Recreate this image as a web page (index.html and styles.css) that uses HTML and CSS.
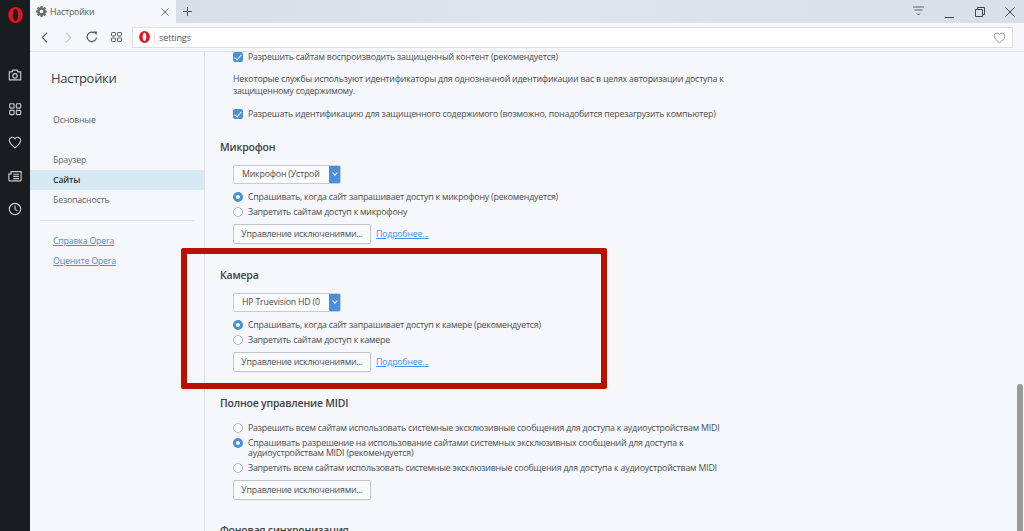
FILE: index.html
```html
<!DOCTYPE html>
<html lang="ru">
<head>
  <meta charset="UTF-8">
  <title>Настройки</title>
  <link rel="stylesheet" href="styles.css">
</head>
<body>
  <div class="window">
    <aside class="rail">
      <svg class="rail-logo" width="15" height="16" viewBox="0 0 18 20"><path fill="#e8111f" fill-rule="evenodd" d="M9 0a9 10 0 1 0 0 20A9 10 0 1 0 9 0zm0 2.600c2 0 3.300 3.300 3.300 7.400S11 17.400 9 17.400 5.700 14.100 5.700 10 7 2.600 9 2.600z"/></svg>
      <svg class="rail-icon" width="14" height="14" viewBox="0 0 16 16" fill="none" stroke="#c9cbcc" stroke-width="1.300"><path d="M1.500 4.500h3l1-2h5l1 2h3v9h-13z"/><circle cx="8" cy="9" r="2.500"/></svg>
      <svg class="rail-icon" width="14" height="14" viewBox="0 0 16 16" fill="none" stroke="#c9cbcc" stroke-width="1.300"><rect x="2" y="2" width="5" height="5" rx="1"/><rect x="9.500" y="2" width="5" height="5" rx="1"/><rect x="2" y="9.500" width="5" height="5" rx="1"/><rect x="9.500" y="9.500" width="5" height="5" rx="1"/></svg>
      <svg class="rail-icon" width="14" height="14" viewBox="0 0 16 16" fill="none" stroke="#c9cbcc" stroke-width="1.300"><path d="M8 14.500C3 10.800 1.500 8.500 1.500 6A3.500 3.500 0 0 1 8 4.300 3.500 3.500 0 0 1 14.500 6c0 2.500-1.500 4.800-6.500 8.500z"/></svg>
      <svg class="rail-icon" width="14" height="14" viewBox="0 0 16 16" fill="none" stroke="#c9cbcc" stroke-width="1.300"><path d="M3.500 3h11.500v9.500a1 1 0 0 1-1 1H2a1 1 0 0 1-1-1V5.500h2.500zM6 6h6.500M6 8.500h6.500M6 11h6.500"/></svg>
      <svg class="rail-icon" width="14" height="14" viewBox="0 0 16 16" fill="none" stroke="#c9cbcc" stroke-width="1.300"><circle cx="8" cy="8" r="6.500"/><path d="M8 4v4.300l2.600 1.700"/></svg>
    </aside>

    <div class="browser">
      <header class="tabstrip">
        <div class="tab">
          <svg width="11" height="11" viewBox="0 0 14 14"><path fill="#6b6e70" fill-rule="evenodd" d="M5.800 0h2.400l.3 1.800 1.100.5 1.500-1 1.700 1.700-1 1.500.5 1.100 1.700.3v2.400l-1.700.3-.5 1.100 1 1.500-1.700 1.700-1.500-1-1.100.5-.3 1.600H5.800l-.3-1.600-1.100-.5-1.500 1-1.700-1.700 1-1.500-.5-1.100L0 8.200V5.800l1.700-.3.5-1.100-1-1.500 1.700-1.700 1.500 1 1.100-.5zM7 4.700a2.300 2.300 0 1 0 0 4.600 2.300 2.300 0 0 0 0-4.600z"/></svg>
          <span class="tab-title">Настройки</span>
          <svg class="tab-close" width="8" height="8" viewBox="0 0 9 9" stroke="#55585a" stroke-width="1"><path d="M.5.500l8 8M8.500.500l-8 8"/></svg>
        </div>
        <svg class="tab-add" width="9" height="9" viewBox="0 0 10 10" stroke="#55585a" stroke-width="1.100"><path d="M5 0v10M0 5h10"/></svg>
        <div class="win-controls">
          <svg width="12" height="12" viewBox="0 0 12 12" fill="none" stroke="#5f6265"><path d="M0 1h11M1.500 4h8M4 7.500l1.500 1.500L7 7.500" stroke-width="1"/></svg>
          <svg width="10" height="12" viewBox="0 0 10 12" stroke="#44474a"><path d="M0 11.500h9" stroke-width="1"/></svg>
          <svg width="10" height="10" viewBox="0 0 10 10" fill="none" stroke="#44474a"><path d="M.5 2.500h7v7h-7zM2.500 2.500v-2h7v7h-2"/></svg>
          <svg width="10" height="10" viewBox="0 0 10 10" stroke="#44474a"><path d="M.5.500l9 9M9.500.500l-9 9"/></svg>
        </div>
      </header>

      <nav class="toolbar">
        <svg class="tool back" width="7" height="11" viewBox="0 0 8 12" fill="none" stroke="#55585a" stroke-width="1.300"><path d="M7 .5L1.500 6 7 11.500"/></svg>
        <svg class="tool forward" width="7" height="11" viewBox="0 0 8 12" fill="none" stroke="#c5c7c9" stroke-width="1.300"><path d="M1 .5L6.500 6 1 11.500"/></svg>
        <svg class="tool reload" width="12" height="12" viewBox="0 0 12 12" fill="none" stroke="#55585a" stroke-width="1.200"><path d="M10.500 6.500A4.700 4.700 0 1 1 8.500 2"/><path d="M7.300 .3l3.700 .4-.6 3.500z" fill="#55585a" stroke="none"/></svg>
        <svg class="tool speed" width="11" height="10" viewBox="0 0 11 10" fill="none" stroke="#55585a"><rect x=".5" y=".5" width="4" height="3.500" rx=".8"/><rect x="6.500" y=".5" width="4" height="3.500" rx=".8"/><rect x=".5" y="6" width="4" height="3.500" rx=".8"/><rect x="6.500" y="6" width="4" height="3.500" rx=".8"/></svg>
        <div class="address">
          <svg width="11" height="12" viewBox="0 0 18 20"><path fill="#e8111f" fill-rule="evenodd" d="M9 0a9 10 0 1 0 0 20A9 10 0 1 0 9 0zm0 3c2 0 3 3.200 3 7s-1 7-3 7-3-3.200-3-7 1-7 3-7z"/></svg>
          <span class="address-text">settings</span>
          <svg class="address-heart" width="13" height="13" viewBox="0 0 16 16" fill="none" stroke="#8d9093" stroke-width="1.200"><path d="M8 14.500C3 10.800 1.500 8.500 1.500 6A3.500 3.500 0 0 1 8 4.300 3.500 3.500 0 0 1 14.500 6c0 2.500-1.500 4.800-6.500 8.500z"/></svg>
        </div>
      </nav>

      <div class="page">
        <aside class="sidebar">
          <h1>Настройки</h1>
          <a class="side-item">Основные</a>
          <a class="side-item browser-item">Браузер</a>
          <a class="side-item active">Сайты</a>
          <a class="side-item">Безопасность</a>
          <hr class="side-rule">
          <a class="side-link">Справка Opera</a>
          <a class="side-link">Оцените Opera</a>
        </aside>

        <main class="content">
          <label class="option"><span class="check"></span>Разрешить сайтам воспроизводить защищенный контент (рекомендуется)</label>
          <p class="note">Некоторые службы используют идентификаторы для однозначной идентификации вас в целях авторизации доступа к защищенному содержимому.</p>
          <label class="option"><span class="check"></span>Разрешать идентификацию для защищенного содержимого (возможно, понадобится перезагрузить компьютер)</label>

          <section class="group mic">
            <h2>Микрофон</h2>
            <div class="select"><span class="select-value">Микрофон (Устрой</span><span class="select-arrow"></span></div>
            <label class="option radio-row"><span class="radio on"></span>Спрашивать, когда сайт запрашивает доступ к микрофону (рекомендуется)</label>
            <label class="option radio-row"><span class="radio"></span>Запретить сайтам доступ к микрофону</label>
            <div class="actions"><button class="btn">Управление исключениями...</button><a class="more">Подробнее...</a></div>
          </section>

          <section class="group camera">
            <h2>Камера</h2>
            <div class="select"><span class="select-value">HP Truevision HD (0</span><span class="select-arrow"></span></div>
            <label class="option radio-row"><span class="radio on"></span>Спрашивать, когда сайт запрашивает доступ к камере (рекомендуется)</label>
            <label class="option radio-row"><span class="radio"></span>Запретить сайтам доступ к камере</label>
            <div class="actions"><button class="btn">Управление исключениями...</button><a class="more">Подробнее...</a></div>
          </section>

          <section class="group midi">
            <h2>Полное управление MIDI</h2>
            <label class="option radio-row"><span class="radio"></span>Разрешить всем сайтам использовать системные эксклюзивные сообщения для доступа к аудиоустройствам MIDI</label>
            <label class="option radio-row"><span class="radio on"></span><span class="wrap-text">Спрашивать разрешение на использование сайтами системных эксклюзивных сообщений для доступа к аудиоустройствам MIDI (рекомендуется)</span></label>
            <label class="option radio-row"><span class="radio"></span>Запретить всем сайтам использовать системные эксклюзивные сообщения для доступа к аудиоустройствам MIDI</label>
            <div class="actions"><button class="btn">Управление исключениями...</button></div>
          </section>

          <section class="group sync">
            <h2>Фоновая синхронизация</h2>
          </section>
        </main>

        <div class="scrollbar"></div>
      </div>
    </div>

    <div class="callout"></div>
  </div>
</body>
</html>
```

FILE: styles.css
```css
html, body {
  margin: 0;
  height: 100%;
  overflow: hidden;
}
body {
  font-family: "Open Sans", "Noto Sans", sans-serif;
  font-size: 8.8px;
  letter-spacing: -0.2px;
  color: #4a4d50;
  background: #f5f7fa;
}
.window {
  display: flex;
  position: relative;
  height: 531px;
  overflow: hidden;
}

/* left rail */
.rail {
  width: 30px;
  flex: none;
  background: #1a1d1f;
  display: flex;
  flex-direction: column;
  align-items: center;
  padding-top: 7px;
  box-sizing: border-box;
}
.rail-logo {
  margin-bottom: 45px;
}
.rail-icon {
  margin-bottom: 19.600px;
}

/* tabs + toolbar */
.browser {
  flex: 1;
  min-width: 0;
  display: flex;
  flex-direction: column;
}
.tabstrip {
  height: 23px;
  flex: none;
  display: flex;
  align-items: center;
  background: linear-gradient(90deg, #d5dbe2, #dfe5ec 50%, #d9dfe7);
}
.tab {
  width: 146px;
  height: 23px;
  box-sizing: border-box;
  background: #f5f7fa;
  display: flex;
  align-items: center;
  padding: 0 7px 0 6px;
  gap: 3px;
}
.tab-title {
  color: #55585a;
}
.tab-close {
  margin-left: auto;
}
.tab-add {
  margin-left: 7px;
}
.win-controls {
  margin-left: auto;
  display: flex;
  align-items: center;
  gap: 20px;
  padding-right: 9px;
}
.toolbar {
  height: 29px;
  flex: none;
  box-sizing: border-box;
  display: flex;
  align-items: center;
  background: #f5f7fa;
  border-bottom: 1px solid #dfe1e4;
}
.tool {
  flex: none;
}
.back {
  margin-left: 11px;
}
.forward {
  margin-left: 17px;
}
.reload {
  margin-left: 14px;
}
.speed {
  margin-left: 13px;
}
.address {
  margin-left: 10px;
  flex: 1;
  margin-right: 11px;
  height: 21px;
  box-sizing: border-box;
  background: #fff;
  border: 1px solid #dcdee1;
  display: flex;
  align-items: center;
  padding: 0 6px;
}
.address-text {
  margin-left: 4px;
  padding-left: 4px;
  border-left: 1px solid #e6e7e9;
  font-size: 9.200px;
  line-height: 13px;
  color: #55585a;
}
.address-heart {
  margin-left: auto;
}

/* page */
.page {
  flex: 1;
  min-height: 0;
  display: flex;
  position: relative;
  overflow: hidden;
}
.sidebar {
  width: 175px;
  flex: none;
  box-sizing: border-box;
  border-right: 1px solid #dfe1e4;
  padding-top: 17px;
}
.sidebar h1 {
  margin: 0 0 23px 21px;
  font-size: 13px;
  font-weight: 400;
  line-height: 18px;
  letter-spacing: -0.3px;
  color: #3d4043;
}
.side-item {
  display: block;
  height: 20px;
  line-height: 21px;
  padding-left: 23px;
  color: #66696c;
}
.side-item.browser-item {
  margin-top: 20px;
}
.side-item.active {
  background: #d6e9f3;
  color: #33363a;
  font-weight: 600;
}
.side-rule {
  margin: 10px 10px 10px;
  border: 0;
  border-top: 1px solid #dcdee1;
}
.side-link {
  display: block;
  height: 20px;
  line-height: 20px;
  padding-left: 23px;
  color: #4a90e2;
  text-decoration: underline;
}

.content {
  flex: 1;
  min-width: 0;
  padding: 0 0 0 15px;
}
.option {
  display: flex;
  align-items: flex-start;
  margin-left: 13px;
  line-height: 10px;
  color: #4a4d50;
}
.check, .radio {
  flex: none;
  box-sizing: border-box;
  width: 10px;
  height: 10px;
  margin-right: 5px;
}
.check {
  border-radius: 2px;
  background: #4a90d9;
  position: relative;
}
.check::after {
  content: "";
  position: absolute;
  left: 3px;
  top: 1px;
  width: 3px;
  height: 6px;
  border: solid #fff;
  border-width: 0 1.500px 1.500px 0;
  transform: rotate(40deg);
}
.radio {
  border-radius: 50%;
  border: 1px solid #b5b7ba;
  background: #fafbfc;
}
.radio.on {
  border: 3px solid #4a90d9;
  background: #fff;
}
.note {
  margin: 11px 0 12px 13px;
  width: 498px;
  line-height: 12px;
}
.group h2 {
  margin: 0;
  font-size: 10.500px;
  font-weight: 600;
  line-height: 14px;
  color: #3f4245;
}
.select {
  margin: 11px 0 8px 13px;
  width: 108px;
  height: 19px;
  box-sizing: border-box;
  display: flex;
  background: #fafbfc;
  border: 1px solid #c9cbce;
  border-radius: 2px;
  overflow: hidden;
}
.select-value {
  flex: 1;
  min-width: 0;
  margin: 0 9px 0 8px;
  line-height: 17px;
  white-space: nowrap;
}
.select-arrow {
  flex: none;
  width: 11px;
  background: #4a90d9;
  position: relative;
}
.select-arrow::after {
  content: "";
  position: absolute;
  left: 3.500px;
  top: 5px;
  width: 3px;
  height: 3px;
  border: solid #fff;
  border-width: 0 1px 1px 0;
  transform: rotate(45deg);
}
.radio-row {
  margin-bottom: 5px;
}
.actions {
  margin: 7px 0 0 13px;
  display: flex;
  align-items: center;
  gap: 5px;
}
.btn {
  width: 138px;
  height: 20px;
  padding: 0;
  font: inherit;
  letter-spacing: inherit;
  white-space: nowrap;
  color: #4a4d50;
  background: #f9fafb;
  border: 1px solid #c4c6c9;
  border-radius: 2px;
}
.more {
  color: #4a90e2;
  text-decoration: underline;
}
.mic {
  margin-top: 21px;
}
.camera {
  margin-top: 24px;
}
.midi {
  margin-top: 24px;
}
.midi h2 {
  margin-bottom: 13px;
}
.wrap-text {
  width: 450px;
}
.sync {
  margin-top: 23px;
}

.scrollbar {
  position: absolute;
  right: 1px;
  top: 332px;
  width: 6px;
  height: 150px;
  border-radius: 3px;
  background: #9a9a9a;
}

/* red annotation drawn over the screenshot */
.callout {
  position: absolute;
  left: 181px;
  top: 248px;
  width: 426px;
  height: 141px;
  box-sizing: border-box;
  border: 6px solid #b81100;
  border-radius: 2px;
}
```
